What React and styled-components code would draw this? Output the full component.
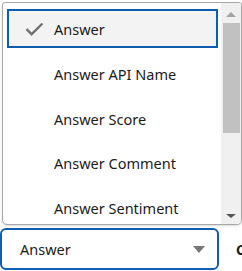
import styled, { createGlobalStyle } from "styled-components";

const options = [
  "Answer",
  "Answer API Name",
  "Answer Score",
  "Answer Comment",
  "Answer Sentiment",
];

function App() {
  return (
    <>
      <GlobalStyle />
      <Page>
        <ListBox>
          <Options>
            {options.map((label, i) => (
              <Option key={label} selected={i === 0}>
                <CheckSlot>
                  {i === 0 && (
                    <svg width="19" height="14" viewBox="0 0 19 14">
                      <path
                        d="M1.5 7.2 L6.6 12.2 L17.5 1.5"
                        fill="none"
                        stroke="#737373"
                        strokeWidth="2.4"
                      />
                    </svg>
                  )}
                </CheckSlot>
                {label}
              </Option>
            ))}
          </Options>
          <Scrollbar>
            <Arrow up />
            <Track>
              <Thumb />
            </Track>
            <Arrow />
          </Scrollbar>
        </ListBox>
        <SelectRow>
          <Select>
            <span>Answer</span>
            <Caret />
          </Select>
          <Peek>C</Peek>
        </SelectRow>
      </Page>
    </>
  );
}

export default App;

const GlobalStyle = createGlobalStyle`
  body {
    margin: 0;
    background: #fff;
    font-family: "Noto Sans", "Open Sans", sans-serif;
    overflow: hidden;
  }
`;

const Page = styled.div`
  width: 242px;
  height: 271px;
  overflow: hidden;
  padding-top: 2px;
  box-sizing: border-box;
`;

const ListBox = styled.div`
  margin-left: 2px;
  width: 240px;
  height: 223px;
  box-sizing: border-box;
  border: 1px solid #a8a8a8;
  border-radius: 3px 3px 5px 5px;
  display: flex;
  overflow: hidden;
  background: #fff;
  box-shadow: 0 1px 2px rgba(0, 0, 0, 0.15);
`;

const Options = styled.div`
  flex: 1;
  padding: 6px 3px 0 4px;
  overflow: hidden;
`;

const Option = styled.div`
  display: flex;
  align-items: center;
  box-sizing: border-box;
  height: ${(p) => (p.selected ? "39px" : "44.5px")};
  margin-bottom: ${(p) => (p.selected ? "4px" : "0")};
  padding-left: 16px;
  font-size: 14.5px;
  color: #1b1b1b;
  white-space: nowrap;
  border: 2px solid ${(p) => (p.selected ? "#0f5db0" : "transparent")};
  background: ${(p) => (p.selected ? "#f3f3f3" : "#fff")};
`;

const CheckSlot = styled.div`
  width: 29px;
  display: flex;
  align-items: center;
`;

const Scrollbar = styled.div`
  width: 20px;
  background: #f0f0f0;
  display: flex;
  flex-direction: column;
  align-items: center;
`;

const Arrow = styled.div`
  height: 18px;
  width: 100%;
  display: flex;
  align-items: center;
  justify-content: center;
  &::before {
    content: "";
    border-left: 5px solid transparent;
    border-right: 5px solid transparent;
    ${(p) =>
      p.up
        ? "border-bottom: 5px solid #a3a3a3; margin-top: 4px;"
        : "border-top: 4px solid #555; margin-top: 2px;"}
  }
`;

const Track = styled.div`
  flex: 1;
  width: 100%;
  padding: 2px 1px 0 2px;
  box-sizing: border-box;
`;

const Thumb = styled.div`
  height: 110px;
  background: #c1c1c1;
`;

const SelectRow = styled.div`
  display: flex;
  align-items: center;
  gap: 17px;
  margin-top: 3px;
`;

const Select = styled.div`
  width: 219px;
  height: 42px;
  flex-shrink: 0;
  box-sizing: border-box;
  border: 2px solid #0f5db0;
  border-radius: 6px;
  display: flex;
  align-items: center;
  justify-content: space-between;
  padding: 0 12px 0 18px;
  font-size: 14.5px;
  color: #1b1b1b;
`;

const Caret = styled.div`
  border-left: 6.5px solid transparent;
  border-right: 6.5px solid transparent;
  border-top: 7px solid #777;
`;

const Peek = styled.span`
  font-size: 14px;
  font-weight: 700;
  color: #1b1b1b;
`;
